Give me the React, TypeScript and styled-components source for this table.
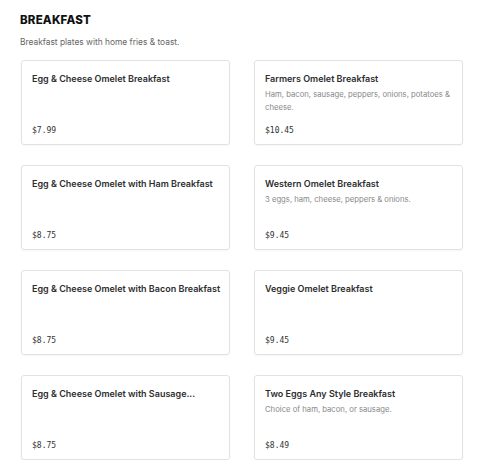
import React from "react";
import styled, { createGlobalStyle } from "styled-components";

const Global = createGlobalStyle`
  html, body { margin: 0; padding: 0; background: #ffffff; }
  body { font-family: Inter, "Noto Sans", sans-serif; color: #222; }
`;

const Page = styled.div`
  padding: 14px 38px 0 20px;
`;

const Heading = styled.h2`
  margin: 0;
  font-size: 11.5px;
  line-height: 13px;
  font-weight: 800;
  letter-spacing: 0.2px;
  color: #111;
`;

const Sub = styled.p`
  margin: 9px 0 0;
  font-size: 8.4px;
  line-height: 12px;
  color: #666;
`;

const Grid = styled.div`
  display: grid;
  grid-template-columns: 209px 209px;
  column-gap: 24px;
  row-gap: 20px;
  margin-top: 12px;
  padding-left: 1px;
`;

const Card = styled.div`
  box-sizing: border-box;
  height: 85px;
  border: 1px solid #e2e2e2;
  border-radius: 3px;
  box-shadow: 0 1px 2px rgba(0, 0, 0, 0.04);
  padding: 11px 6px 7px 10px;
  display: flex;
  flex-direction: column;
`;

const Title = styled.div`
  font-size: 9px;
  line-height: 14px;
  font-weight: 600;
  color: #2e2e2e;
  white-space: nowrap;
`;

const Desc = styled.div`
  margin-top: 2px;
  padding-right: 4px;
  font-size: 7.7px;
  line-height: 13px;
  color: #888;
`;

const Price = styled.div`
  margin-top: auto;
  font-family: "DejaVu Sans Mono", "Liberation Mono", monospace;
  font-size: 8px;
  line-height: 12px;
  color: #333;
`;

const items = [
  { t: "Egg & Cheese Omelet Breakfast", p: "$7.99" },
  { t: "Farmers Omelet Breakfast", d: "Ham, bacon, sausage, peppers, onions, potatoes & cheese.", p: "$10.45" },
  { t: "Egg & Cheese Omelet with Ham Breakfast", p: "$8.75" },
  { t: "Western Omelet Breakfast", d: "3 eggs, ham, cheese, peppers & onions.", p: "$9.45" },
  { t: "Egg & Cheese Omelet with Bacon Breakfast", p: "$8.75" },
  { t: "Veggie Omelet Breakfast", p: "$9.45" },
  { t: "Egg & Cheese Omelet with Sausage...", p: "$8.75" },
  { t: "Two Eggs Any Style Breakfast", d: "Choice of ham, bacon, or sausage.", p: "$8.49" },
];

export default function App() {
  return (
    <Page>
      <Global />
      <Heading>BREAKFAST</Heading>
      <Sub>Breakfast plates with home fries &amp; toast.</Sub>
      <Grid>
        {items.map((it, i) => (
          <Card key={i}>
            <Title>{it.t}</Title>
            {it.d && <Desc>{it.d}</Desc>}
            <Price>{it.p}</Price>
          </Card>
        ))}
      </Grid>
    </Page>
  );
}
